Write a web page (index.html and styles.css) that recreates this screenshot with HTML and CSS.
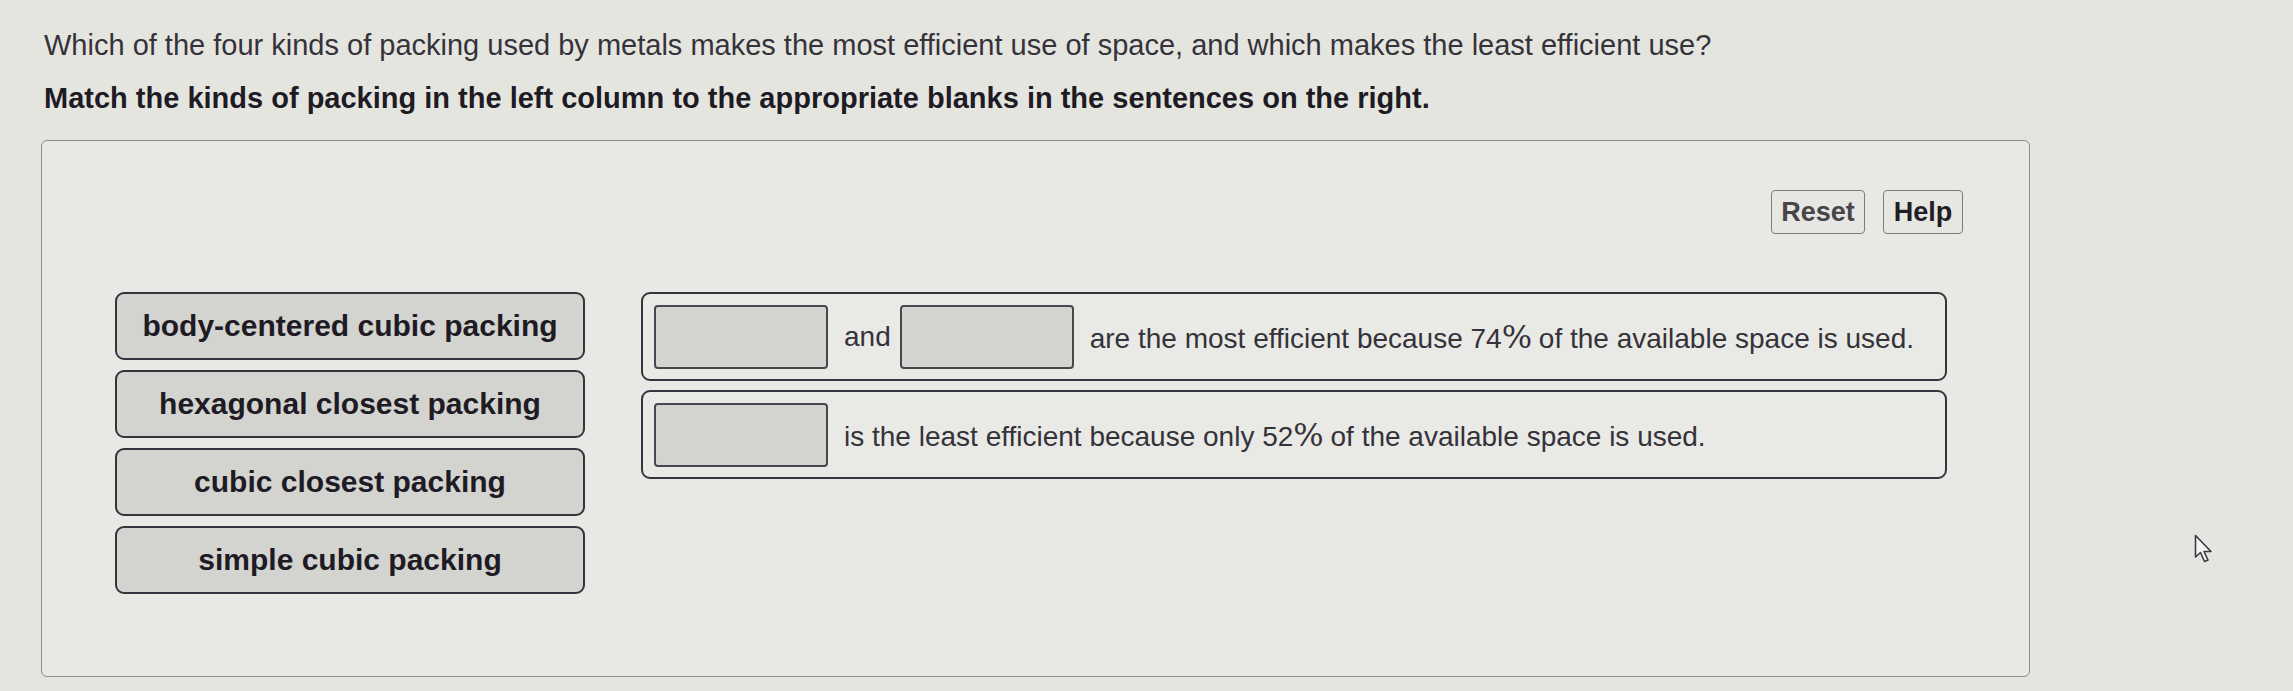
FILE: index.html
```html
<!DOCTYPE html>
<html lang="en">
<head>
    <meta charset="UTF-8">
    <title>Packing of metals</title>
    <link rel="stylesheet" href="styles.css">
</head>
<body>

<p class="question">Which of the four kinds of packing used by metals makes the most efficient use of space, and which makes the least efficient use?</p>
<p class="instruction">Match the kinds of packing in the left column to the appropriate blanks in the sentences on the right.</p>

<div class="panel">
    <div class="toolbar">
        <button class="tbtn reset">Reset</button>
        <button class="tbtn help">Help</button>
    </div>
    <div class="work">
        <div class="tiles">
            <div class="tile">body-centered cubic packing</div>
            <div class="tile">hexagonal closest packing</div>
            <div class="tile">cubic closest packing</div>
            <div class="tile">simple cubic packing</div>
        </div>
        <div class="sentences">
            <div class="sentence">
                <span class="slot"></span>
                <span class="word">and</span>
                <span class="slot"></span>
                <span class="text">are the most efficient because 74<span class="pct">%</span> of the available space is used.</span>
            </div>
            <div class="sentence">
                <span class="slot"></span>
                <span class="text">is the least efficient because only 52<span class="pct">%</span> of the available space is used.</span>
            </div>
        </div>
    </div>
</div>

<!-- mouse pointer -->
<svg class="pointer" width="20" height="30" viewBox="0 0 20 30">
    <path d="M1.5 1.5 L1.5 23 L6.5 18.5 L10.5 27.5 L14 26 L10 17.5 L17 17.5 Z" fill="#f4f4f2" stroke="#3c3844" stroke-width="1.6" stroke-linejoin="round"/>
</svg>

</body>
</html>
```

FILE: styles.css
```css
* {margin:0;padding:0;box-sizing:border-box;}
html,body {width:100%;height:100%;}
body {
    background: #e5e5e0;
    font-family: "Liberation Sans", Arial, sans-serif;
    color: #35323a;
    padding: 30px 0 0 44px;
    position: relative;
    overflow: hidden;
}
.question {
    font-size: 29px;
    line-height: 30px;
}
.instruction {
    font-size: 29px;
    line-height: 30px;
    font-weight: bold;
    color: #1f1b24;
    margin-top: 23px;
}
.panel {
    width: 1989px;
    height: 537px;
    margin: 27px 0 0 -3px;
    border: 1.5px solid #8e8c90;
    border-radius: 6px;
    background: #e8e8e4;
    padding: 49px 0 0 73px;
}
.toolbar {
    display: flex;
    justify-content: flex-end;
    gap: 18px;
    padding-right: 66px;
}
.tbtn {
    height: 44px;
    padding: 0 8px;
    border: 1.5px solid #7d7b80;
    border-radius: 4px;
    background: #e6e6e2;
    font-family: "Liberation Sans", Arial, sans-serif;
    font-size: 27px;
    font-weight: bold;
}
.reset {width: 94px;color: #47444a;}
.help {width: 80px;color: #211d26;}

.work {
    display: flex;
    gap: 56px;
    margin-top: 58px;
}
.tiles {
    display: flex;
    flex-direction: column;
    gap: 10px;
    width: 470px;
}
.tile {
    height: 68px;
    border: 2.5px solid #37323e;
    border-radius: 9px;
    background: #d3d3d0;
    font-size: 30px;
    font-weight: bold;
    color: #1f1b24;
    display: flex;
    align-items: center;
    justify-content: center;
}
.sentences {
    display: flex;
    flex-direction: column;
    gap: 9px;
    width: 1306px;
}
.sentence {
    display: flex;
    align-items: center;
    border: 2.5px solid #38333e;
    border-radius: 9px;
    background: #e9e9e5;
    padding: 0 11px;
    min-height: 89px;
    font-size: 28px;
    color: #35323a;
}
.slot {
    width: 174px;
    height: 64px;
    border: 2px solid #4a4650;
    border-radius: 4px;
    background: #d3d3d0;
    flex-shrink: 0;
}
.word {
    margin: 0 9px 0 16px;
}
.text {
    margin-left: 16px;
}
.pct {
    font-family: "DejaVu Serif", serif;
    font-size: 32px;
    letter-spacing: -1px;
}
.pointer {
    position: absolute;
    left: 2194px;
    top: 534px;
}
```
